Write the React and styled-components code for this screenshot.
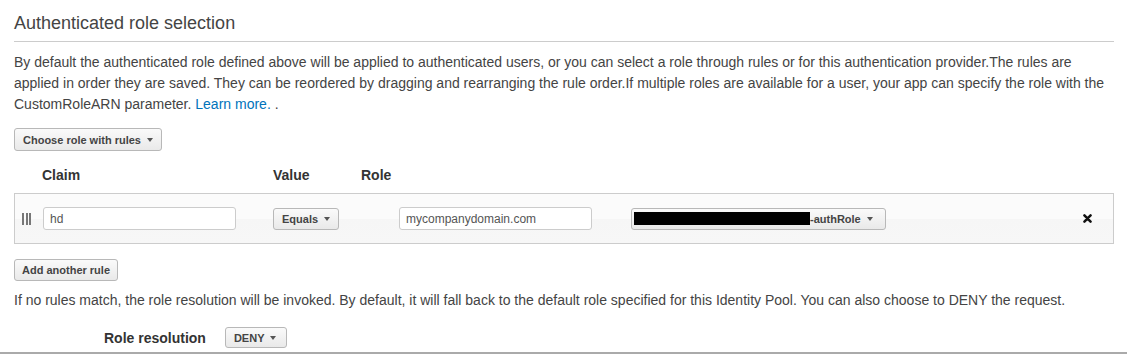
import React from "react";
import styled, { createGlobalStyle } from "styled-components";

const Global = createGlobalStyle`
  html, body { margin: 0; padding: 0; background: #fff; }
  body { font-family: "Liberation Sans", Arial, Helvetica, sans-serif; color: #444; }
  * { box-sizing: border-box; }
`;

const Page = styled.div`
  width: 1127px;
  border-bottom: 2px solid #aaa;
`;

const Section = styled.div`
  padding: 0 13px 4px 14px;
`;

const Title = styled.h2`
  margin: 0;
  padding: 12px 0 7px;
  font-size: 18px;
  line-height: 22px;
  font-weight: normal;
  color: #444;
  border-bottom: 1px solid #ccc;
`;

const Para = styled.p`
  margin: ${(p) => p.$mt || 0}px 0 0;
  font-size: 14px;
  line-height: 21px;
  color: #444;
  white-space: nowrap;
`;

const Link = styled.a`
  color: #0073bb;
  text-decoration: none;
`;

const Button = styled.button`
  display: inline-flex;
  align-items: center;
  height: ${(p) => p.$h || 22}px;
  margin: ${(p) => p.$mt || 0}px 0 0 ${(p) => p.$ml || 0}px;
  padding: 0 ${(p) => p.$pr || 8}px 0 ${(p) => p.$pl || 8}px;
  width: ${(p) => (p.$w ? p.$w + "px" : "auto")};
  font-family: inherit;
  font-size: 11px;
  font-weight: bold;
  color: #444;
  background: linear-gradient(#fafafa, #e9e9e9);
  border: 1px solid #b8b8b8;
  border-radius: 3px;
  white-space: nowrap;
  overflow: hidden;
  cursor: pointer;
`;

const Caret = styled.span`
  display: inline-block;
  width: 0;
  height: 0;
  margin-left: 6px;
  border-left: 3.5px solid transparent;
  border-right: 3.5px solid transparent;
  border-top: 4px solid #555;
`;

const HeaderRow = styled.div`
  display: flex;
  margin-top: 14px;
  padding-left: 28px;
`;

const HeaderCell = styled.div`
  width: ${(p) => (p.$w ? p.$w + "px" : "auto")};
  font-size: 14px;
  line-height: 20px;
  font-weight: bold;
  color: #333;
`;

const RuleBox = styled.div`
  display: flex;
  align-items: center;
  height: 51px;
  margin-top: 8px;
  padding: 0 21px 0 0;
  border: 1px solid #ccc;
  background: linear-gradient(#fbfbfb 0%, #fbfbfb 50%, #f6f6f6 51%, #f7f7f7 100%);
`;

const Handle = styled.div`
  display: flex;
  gap: 1.5px;
  width: 28px;
  padding-left: 7px;
  span {
    width: 2px;
    height: 12px;
    background: #777;
  }
`;

const Input = styled.div`
  display: flex;
  align-items: center;
  width: ${(p) => p.$w}px;
  height: 23px;
  margin-left: ${(p) => p.$ml || 0}px;
  padding-left: 6px;
  background: #fff;
  border: 1px solid #ccc;
  border-radius: 3px;
  font-size: 12px;
  color: #555;
`;

const Redacted = styled.span`
  display: inline-block;
  width: 176px;
  height: 13px;
  background: #000;
`;

const Remove = styled.svg`
  margin-left: auto;
  width: 9px;
  height: 9px;
`;

const ResolutionRow = styled.div`
  display: flex;
  align-items: center;
  margin-top: 16px;
  padding-left: 90px;
`;

const Label = styled.span`
  font-size: 14px;
  font-weight: bold;
  color: #333;
`;

export default function App() {
  return (
    <Page>
      <Global />
      <Section>
        <Title>Authenticated role selection</Title>
        <Para $mt={10}>
          By default the authenticated role defined above will be applied to authenticated users, or you can select a role through rules or for this authentication provider.The rules are
          <br />
          applied in order they are saved. They can be reordered by dragging and rearranging the rule order.If multiple roles are available for a user, your app can specify the role with the
          <br />
          CustomRoleARN parameter. <Link href="#">Learn more.</Link> .
        </Para>

        <Button $mt={13} $h={23} $w={148} $pr={9}>
          Choose role with rules <Caret />
        </Button>

        <HeaderRow>
          <HeaderCell $w={231}>Claim</HeaderCell>
          <HeaderCell $w={88}>Value</HeaderCell>
          <HeaderCell>Role</HeaderCell>
        </HeaderRow>

        <RuleBox>
          <Handle>
            <span />
            <span />
            <span />
          </Handle>
          <Input $w={193}>hd</Input>
          <Button $ml={37} $w={66} $pl={8}>
            Equals <Caret />
          </Button>
          <Input $ml={60} $w={193}>mycompanydomain.com</Input>
          <Button $ml={39} $w={255} $pl={2} $pr={9}>
            <Redacted />
            -authRole <Caret />
          </Button>
          <Remove viewBox="0 0 10 10">
            <path d="M1.6 1.6 L8.4 8.4 M8.4 1.6 L1.6 8.4" stroke="#111" strokeWidth="2.8" strokeLinecap="round" />
          </Remove>
        </RuleBox>

        <Button $mt={15} $pl={7} $pr={7}>
          Add another rule
        </Button>

        <Para $mt={9}>
          If no rules match, the role resolution will be invoked. By default, it will fall back to the default role specified for this Identity Pool. You can also choose to DENY the request.
        </Para>

        <ResolutionRow>
          <Label>Role resolution</Label>
          <Button $ml={19} $w={62} $h={21} $pl={8}>
            DENY <Caret />
          </Button>
        </ResolutionRow>
      </Section>
    </Page>
  );
}
